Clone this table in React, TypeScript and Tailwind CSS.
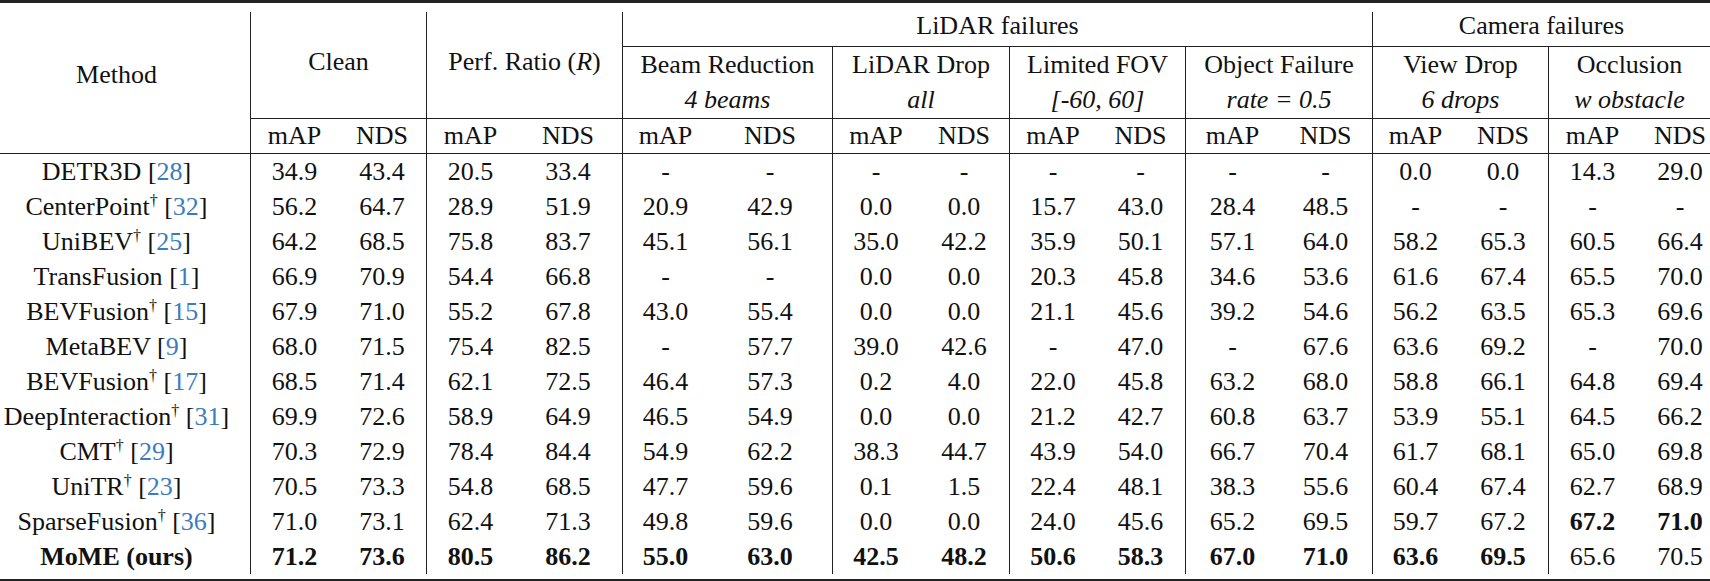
import React from 'react';

type Row = {
  name: string;
  cite?: string;
  dagger?: boolean;
  bold?: boolean;
  values: string[];
  boldCols?: number[];
};

const rows: Row[] = [
  { name: 'DETR3D', cite: '28', values: ['34.9', '43.4', '20.5', '33.4', '-', '-', '-', '-', '-', '-', '-', '-', '0.0', '0.0', '14.3', '29.0'] },
  { name: 'CenterPoint', cite: '32', dagger: true, values: ['56.2', '64.7', '28.9', '51.9', '20.9', '42.9', '0.0', '0.0', '15.7', '43.0', '28.4', '48.5', '-', '-', '-', '-'] },
  { name: 'UniBEV', cite: '25', dagger: true, values: ['64.2', '68.5', '75.8', '83.7', '45.1', '56.1', '35.0', '42.2', '35.9', '50.1', '57.1', '64.0', '58.2', '65.3', '60.5', '66.4'] },
  { name: 'TransFusion', cite: '1', values: ['66.9', '70.9', '54.4', '66.8', '-', '-', '0.0', '0.0', '20.3', '45.8', '34.6', '53.6', '61.6', '67.4', '65.5', '70.0'] },
  { name: 'BEVFusion', cite: '15', dagger: true, values: ['67.9', '71.0', '55.2', '67.8', '43.0', '55.4', '0.0', '0.0', '21.1', '45.6', '39.2', '54.6', '56.2', '63.5', '65.3', '69.6'] },
  { name: 'MetaBEV', cite: '9', values: ['68.0', '71.5', '75.4', '82.5', '-', '57.7', '39.0', '42.6', '-', '47.0', '-', '67.6', '63.6', '69.2', '-', '70.0'] },
  { name: 'BEVFusion', cite: '17', dagger: true, values: ['68.5', '71.4', '62.1', '72.5', '46.4', '57.3', '0.2', '4.0', '22.0', '45.8', '63.2', '68.0', '58.8', '66.1', '64.8', '69.4'] },
  { name: 'DeepInteraction', cite: '31', dagger: true, values: ['69.9', '72.6', '58.9', '64.9', '46.5', '54.9', '0.0', '0.0', '21.2', '42.7', '60.8', '63.7', '53.9', '55.1', '64.5', '66.2'] },
  { name: 'CMT', cite: '29', dagger: true, values: ['70.3', '72.9', '78.4', '84.4', '54.9', '62.2', '38.3', '44.7', '43.9', '54.0', '66.7', '70.4', '61.7', '68.1', '65.0', '69.8'] },
  { name: 'UniTR', cite: '23', dagger: true, values: ['70.5', '73.3', '54.8', '68.5', '47.7', '59.6', '0.1', '1.5', '22.4', '48.1', '38.3', '55.6', '60.4', '67.4', '62.7', '68.9'] },
  { name: 'SparseFusion', cite: '36', dagger: true, values: ['71.0', '73.1', '62.4', '71.3', '49.8', '59.6', '0.0', '0.0', '24.0', '45.6', '65.2', '69.5', '59.7', '67.2', '67.2', '71.0'], boldCols: [14, 15] },
  { name: 'MoME (ours)', bold: true, values: ['71.2', '73.6', '80.5', '86.2', '55.0', '63.0', '42.5', '48.2', '50.6', '58.3', '67.0', '71.0', '63.6', '69.5', '65.6', '70.5'], boldCols: [0, 1, 2, 3, 4, 5, 6, 7, 8, 9, 10, 11, 12, 13] },
];

const groups = [
  { title: 'Beam Reduction', sub: '4 beams' },
  { title: 'LiDAR Drop', sub: 'all' },
  { title: 'Limited FOV', sub: '[-60, 60]' },
  { title: 'Object Failure', sub: 'rate = 0.5' },
  { title: 'View Drop', sub: '6 drops' },
  { title: 'Occlusion', sub: 'w obstacle' },
];

const colWidths = [
  'w-[250px]',
  'w-[88px]', 'w-[88px]',
  'w-[88px]', 'w-[108px]',
  'w-[86px]', 'w-[124px]',
  'w-[87px]', 'w-[90px]',
  'w-[87px]', 'w-[89px]',
  'w-[94px]', 'w-[93px]',
  'w-[86px]', 'w-[90px]',
  'w-[88px]', 'w-[74px]',
];

const line = 'border-[#222]';

function Cite({ n }: { n: string }) {
  return (
    <>
      {' '}[<span className="text-[#3b7cbf]">{n}</span>]
    </>
  );
}

export default function App() {
  return (
    <div className="w-[1710px] h-[581px] bg-white text-[#111] font-['Liberation_Serif'] text-[26px]">
      <div className="h-[3px] bg-[#222]" />
      <table className="w-[1710px] table-fixed border-separate border-spacing-0 text-center">
        <colgroup>
          {colWidths.map((w, i) => (
            <col key={i} className={w} />
          ))}
        </colgroup>
        <thead>
          <tr className="h-[9px]">
            <td colSpan={17} className="p-0" />
          </tr>
          <tr className="h-[34px]">
            <th rowSpan={3} className={`p-0 pr-[17px] pb-[16px] font-normal border-b ${line}`}>
              Method
            </th>
            <th colSpan={2} rowSpan={2} className={`p-0 pb-[8px] font-normal border-l border-b ${line}`}>
              Clean
            </th>
            <th colSpan={2} rowSpan={2} className={`p-0 pb-[8px] font-normal border-l border-b ${line}`}>
              Perf. Ratio (<i>R</i>)
            </th>
            <th colSpan={8} className={`p-0 pb-[6px] leading-[28px] font-normal border-l border-b ${line}`}>
              LiDAR failures
            </th>
            <th colSpan={4} className={`p-0 pb-[6px] leading-[28px] font-normal border-l border-b ${line}`}>
              Camera failures
            </th>
          </tr>
          <tr className="h-[71px]">
            {groups.map((g) => (
              <th key={g.title} colSpan={2} className={`p-0 pb-[1px] font-normal leading-[35px] border-l border-b ${line}`}>
                <div>{g.title}</div>
                <div className="italic">{g.sub}</div>
              </th>
            ))}
          </tr>
          <tr className="h-[35px]">
            {Array.from({ length: 16 }).map((_, i) => (
              <th
                key={i}
                className={`p-0 font-normal leading-[30px] border-b ${line} ${i % 2 === 0 ? 'border-l' : ''} ${i === 15 ? 'pl-[14px]' : ''}`}
              >
                {i % 2 === 0 ? 'mAP' : 'NDS'}
              </th>
            ))}
          </tr>
        </thead>
        <tbody>
          {rows.map((r, ri) => (
            <tr key={ri} className="h-[35px]">
              <td className={`p-0 pr-[17px] leading-[30px] whitespace-nowrap ${r.bold ? 'font-bold' : ''}`}>
                {r.name}
                {r.dagger && <sup className="text-[16px] top-[-0.55em]">†</sup>}
                {r.cite && <Cite n={r.cite} />}
              </td>
              {r.values.map((v, i) => (
                <td
                  key={i}
                  className={`p-0 leading-[30px] ${line} ${i % 2 === 0 ? 'border-l' : ''} ${i === 15 ? 'pl-[14px]' : ''} ${r.boldCols?.includes(i) ? 'font-bold' : ''}`}
                >
                  {v}
                </td>
              ))}
            </tr>
          ))}
          <tr className="h-[5px]">
            <td colSpan={17} className="p-0" />
          </tr>
        </tbody>
      </table>
      <div className="h-[3px] bg-[#222]" />
    </div>
  );
}
